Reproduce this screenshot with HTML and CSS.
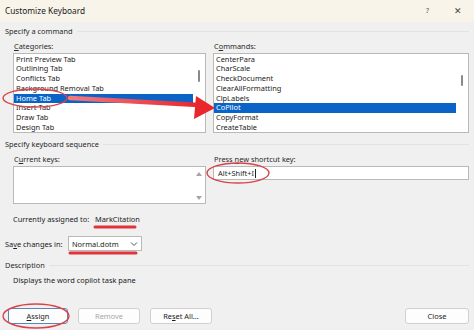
FILE: index.html
```html
<!DOCTYPE html>
<html>
<head>
<meta charset="utf-8">
<link rel="stylesheet" href="styles.css">
</head>
<body>
<div class="dialog">
  <div class="titlebar">
    <span class="title">Customize Keyboard</span>
    <span class="tb-btns"><span class="help">?</span><span class="close-x">✕</span></span>
  </div>

  <div class="group-head head1">Specify a command</div>
  <div class="cols">
    <div class="col left">
      <div class="label"><u>C</u>ategories:</div>
      <div class="listbox">
        <div class="items">
          <div class="item">Print Preview Tab</div>
          <div class="item">Outlining Tab</div>
          <div class="item">Conflicts Tab</div>
          <div class="item">Background Removal Tab</div>
          <div class="item sel">Home Tab</div>
          <div class="item">Insert Tab</div>
          <div class="item">Draw Tab</div>
          <div class="item">Design Tab</div>
        </div>
        <div class="scroll"><span class="thumb thumb-cat"></span></div>
      </div>
    </div>
    <div class="col right">
      <div class="label">C<u>o</u>mmands:</div>
      <div class="listbox">
        <div class="items">
          <div class="item">CenterPara</div>
          <div class="item">CharScale</div>
          <div class="item">CheckDocument</div>
          <div class="item">ClearAllFormatting</div>
          <div class="item">ClpLabels</div>
          <div class="item sel">CoPilot</div>
          <div class="item">CopyFormat</div>
          <div class="item">CreateTable</div>
        </div>
        <div class="scroll"><span class="thumb thumb-cmd"></span></div>
      </div>
    </div>
  </div>

  <div class="group-head head2">Specify keyboard sequence</div>
  <div class="cols">
    <div class="col left">
      <div class="label">C<u>u</u>rrent keys:</div>
      <div class="keysbox">
        <div class="keys-area"></div>
        <div class="keys-scroll">
          <svg width="6" height="4" viewBox="0 0 6 4"><path d="M0 4 L3 0 L6 4 Z" fill="#a6a6a6"/></svg>
          <svg width="6" height="4" viewBox="0 0 6 4"><path d="M0 0 L3 4 L6 0 Z" fill="#a6a6a6"/></svg>
        </div>
      </div>
    </div>
    <div class="col right">
      <div class="label">Press <u>n</u>ew shortcut key:</div>
      <div class="inputbox">Alt+Shift+I<span class="caret"></span></div>
    </div>
  </div>

  <div class="assigned"><span class="assigned-label">Currently assigned to:</span><span class="assigned-val">MarkCitation</span></div>

  <div class="save-row">
    <span class="save-label">Sa<u>v</u>e changes in:</span>
    <div class="dropdown"><span>Normal.dotm</span>
      <svg class="chev" width="8" height="6" viewBox="0 0 8 6"><path d="M1 1.5 L4 4.5 L7 1.5" fill="none" stroke="#555" stroke-width="1"/></svg>
    </div>
  </div>

  <div class="group-head head3">Description</div>
  <div class="desc">Displays the word copilot task pane</div>

  <div class="buttons">
    <div class="btn-group">
      <button class="btn default"><u>A</u>ssign</button>
      <button class="btn disabled">Remove</button>
      <button class="btn">Re<u>s</u>et All...</button>
    </div>
    <button class="btn">Close</button>
  </div>

  <svg class="annot" width="474" height="330" viewBox="0 0 474 330">
    <defs>
      <linearGradient id="ag" x1="0" x2="1" y1="0" y2="0">
        <stop offset="0" stop-color="#f07a7e"/>
        <stop offset="1" stop-color="#e8262c"/>
      </linearGradient>
    </defs>
    <ellipse cx="35" cy="98" rx="32" ry="9" fill="none" stroke="#d9444a" stroke-width="1.4"/>
    <line x1="70" y1="98" x2="199" y2="105" stroke="url(#ag)" stroke-width="4.5" stroke-linecap="round"/>
    <polygon points="196,96 215,108 194,119" fill="#e8262c"/>
    <ellipse cx="238" cy="173" rx="31" ry="10" fill="none" stroke="#d9444a" stroke-width="1.4"/>
    <line x1="95" y1="227" x2="135" y2="227" stroke="#e0343a" stroke-width="3" stroke-linecap="round"/>
    <line x1="70" y1="253" x2="136" y2="253" stroke="#e0343a" stroke-width="3" stroke-linecap="round"/>
    <ellipse cx="36" cy="316" rx="33" ry="12" fill="none" stroke="#d9444a" stroke-width="1.4"/>
  </svg>
</div>
</body>
</html>
```

FILE: styles.css
```css
* { box-sizing: border-box; }
html, body { margin: 0; padding: 0; }
body {
  width: 474px;
  height: 330px;
  overflow: hidden;
  font-family: "Noto Sans", "Open Sans", sans-serif;
  font-size: 7.4px;
  color: #1b1b1b;
}
u { text-decoration: underline; text-underline-offset: 1px; }

.dialog {
  position: relative;
  width: 474px;
  height: 330px;
  background: #f0f0f0;
}

.titlebar {
  height: 22px;
  background: #f8f4ea;
  display: flex;
  align-items: center;
  justify-content: space-between;
  padding: 0 0 2px 5px;
}
.title { font-size: 8.3px; color: #222; }
.tb-btns { display: flex; align-items: center; }
.help { font-size: 7.5px; color: #555; margin-right: 25px; }
.close-x { font-size: 9px; color: #444; margin-right: 12px; }

.group-head {
  display: flex;
  align-items: center;
  height: 12px;
  padding-left: 5px;
  padding-right: 5px;
  color: #2a2a2a;
  white-space: nowrap;
}
.group-head::after {
  content: "";
  flex: 1;
  height: 1px;
  background: #e2e2e2;
  margin-left: 4px;
}
.head1 { margin-top: 3px; }
.head2 { margin-top: 5px; }
.head3 { margin-top: 8px; }

.cols {
  display: flex;
  gap: 7px;
  padding-left: 13px;
  padding-right: 5px;
}
.col.left { width: 193px; }
.col.right { width: 256px; }
.label {
  height: 12px;
  line-height: 12px;
  margin-top: 3px;
  margin-bottom: 1px;
  padding-left: 1px;
  color: #2a2a2a;
  white-space: nowrap;
}

.listbox {
  display: flex;
  height: 80px;
  background: #fff;
  border: 1px solid #b9b9b9;
}
.items { flex: 1; padding-top: 0.5px; }
.item {
  height: 9.8px;
  line-height: 9.8px;
  padding-left: 2px;
  white-space: nowrap;
}
.item.sel { background: #0a64c8; color: #fff; }
.scroll { width: 12px; }
.thumb {
  display: block;
  width: 2px;
  background: #8a8a8a;
  border-radius: 1px;
  margin-left: 5px;
}
.thumb-cat { margin-top: 16px; height: 12px; }
.thumb-cmd { margin-top: 21px; height: 11px; }

.keysbox {
  display: flex;
  height: 38px;
  background: #fff;
  border: 1px solid #b9b9b9;
}
.keys-area { flex: 1; }
.keys-scroll {
  width: 12px;
  display: flex;
  flex-direction: column;
  justify-content: space-between;
  align-items: center;
  padding: 5px 0 3px;
}

.inputbox {
  height: 14px;
  background: #fff;
  border: 1px solid #b9b9b9;
  padding-left: 4px;
  display: flex;
  align-items: center;
  white-space: nowrap;
}
.caret {
  display: inline-block;
  width: 1px;
  height: 9px;
  background: #222;
  margin-left: 0.5px;
}

.assigned {
  display: flex;
  height: 12px;
  line-height: 12px;
  margin-top: 9px;
  padding-left: 13px;
  white-space: nowrap;
}
.assigned-label { width: 82px; flex-shrink: 0; }

.save-row {
  display: flex;
  align-items: center;
  height: 15px;
  margin-top: 11px;
  padding-left: 5px;
  white-space: nowrap;
}
.save-label { width: 63px; flex-shrink: 0; }
.dropdown {
  width: 74px;
  height: 15px;
  background: #fff;
  border: 1px solid #b9b9b9;
  display: flex;
  align-items: center;
  justify-content: space-between;
  padding: 0 3px 0 3px;
}

.desc {
  height: 12px;
  line-height: 12px;
  margin-top: 3px;
  padding-left: 13px;
  white-space: nowrap;
}

.buttons {
  display: flex;
  justify-content: space-between;
  align-items: center;
  margin-top: 22px;
  padding-left: 8px;
  padding-right: 5px;
}
.btn-group { display: flex; gap: 10px; }
.btn {
  font-family: inherit;
  font-size: 7.4px;
  color: #1b1b1b;
  width: 62px;
  height: 16px;
  padding: 0;
  background: #fdfdfd;
  border: 1px solid #d0d0d0;
  border-radius: 3px;
}
.btn.default { width: 60px; border-color: #5a86b8; }
.btn.disabled { color: #a8a8a8; }
.buttons > .btn { width: 64px; }

.annot {
  position: absolute;
  left: 0;
  top: 0;
  pointer-events: none;
}
```
